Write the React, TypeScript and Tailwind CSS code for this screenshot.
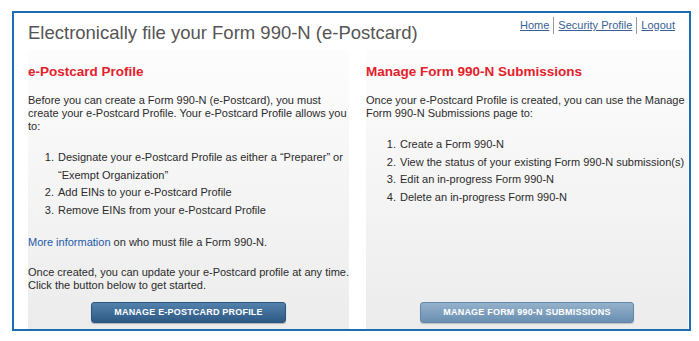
export default function App() {
  return (
    <div className="w-[699px] h-[341px] bg-white pt-[11px] pl-[12px] font-['Liberation_Sans',Arial,sans-serif]">
      <div className="w-[679px] h-[320px] border-2 border-[#1d6db5] bg-white flex flex-col pl-[14px] pr-[1px]">
        {/* Header */}
        <div className="flex justify-between h-[37px] shrink-0">
          <h1 className="pt-[9px] text-[18.5px] leading-[22px] text-[#555]">
            Electronically file your Form 990-N (e-Postcard)
          </h1>
          <div className="flex items-start pt-[4px] pr-[13px] text-[11px] leading-[17px] text-[#3a5f95]">
            <a href="#" className="underline pr-[4px]">Home</a>
            <span className="border-l border-[#999] pl-[4px] pr-[4px]">
              <a href="#" className="underline">Security Profile</a>
            </span>
            <span className="border-l border-[#999] pl-[4px]">
              <a href="#" className="underline">Logout</a>
            </span>
          </div>
        </div>

        {/* Panels */}
        <div className="flex-1 grid grid-cols-[321px_322px] gap-[17px] text-[11px] text-[#2b2b2b]">
          <section className="flex flex-col bg-gradient-to-b from-[#fdfdfd] to-[#ececec] pb-[6px]">
            <h2 className="mt-[14px] text-[13.5px] leading-[16px] font-bold text-[#e4202a]">e-Postcard Profile</h2>
            <p className="mt-[14px] leading-[13px]">
              Before you can create a Form 990-N (e-Postcard), you must create your e-Postcard Profile. Your e-Postcard Profile allows you to:
            </p>
            <ol className="mt-[16px] pl-[29px] list-decimal leading-[17.5px]">
              <li className="pl-[1px]">Designate your e-Postcard Profile as either a “Preparer” or “Exempt Organization”</li>
              <li className="pl-[1px]">Add EINs to your e-Postcard Profile</li>
              <li className="pl-[1px]">Remove EINs from your e-Postcard Profile</li>
            </ol>
            <p className="mt-[17px] leading-[13px]">
              <a href="#" className="text-[#1f5aa6]">More information</a> on who must file a Form 990-N.
            </p>
            <p className="mt-[17px] leading-[13px]">
              Once created, you can update your e-Postcard profile at any time. Click the button below to get started.
            </p>
            <div className="mt-auto flex justify-center">
              <button className="w-[195px] h-[21px] rounded-[3px] border border-[#2a5580] bg-gradient-to-b from-[#5281ab] to-[#2d5a85] text-white text-[9px] font-bold tracking-[0.2px] shadow-[0_1px_1px_rgba(0,0,0,0.25)]">
                MANAGE E-POSTCARD PROFILE
              </button>
            </div>
          </section>

          <section className="flex flex-col bg-gradient-to-b from-[#fdfdfd] to-[#ececec] pb-[6px]">
            <h2 className="mt-[14px] text-[13.5px] leading-[16px] font-bold text-[#e4202a]">Manage Form 990-N Submissions</h2>
            <p className="mt-[14px] leading-[13px]">
              Once your e-Postcard Profile is created, you can use the Manage Form 990-N Submissions page to:
            </p>
            <ol className="mt-[16px] pl-[33px] list-decimal leading-[17.7px]">
              <li className="pl-[1px]">Create a Form 990-N</li>
              <li className="pl-[1px] whitespace-nowrap">View the status of your existing Form 990-N submission(s)</li>
              <li className="pl-[1px]">Edit an in-progress Form 990-N</li>
              <li className="pl-[1px]">Delete an in-progress Form 990-N</li>
            </ol>
            <div className="mt-auto flex justify-center">
              <button className="w-[214px] h-[21px] rounded-[3px] border border-[#6388ab] bg-gradient-to-b from-[#94b1ca] to-[#6a8fb1] text-white text-[9px] font-bold tracking-[0.2px] shadow-[0_1px_1px_rgba(0,0,0,0.2)]">
                MANAGE FORM 990-N SUBMISSIONS
              </button>
            </div>
          </section>
        </div>
      </div>
    </div>
  );
}
